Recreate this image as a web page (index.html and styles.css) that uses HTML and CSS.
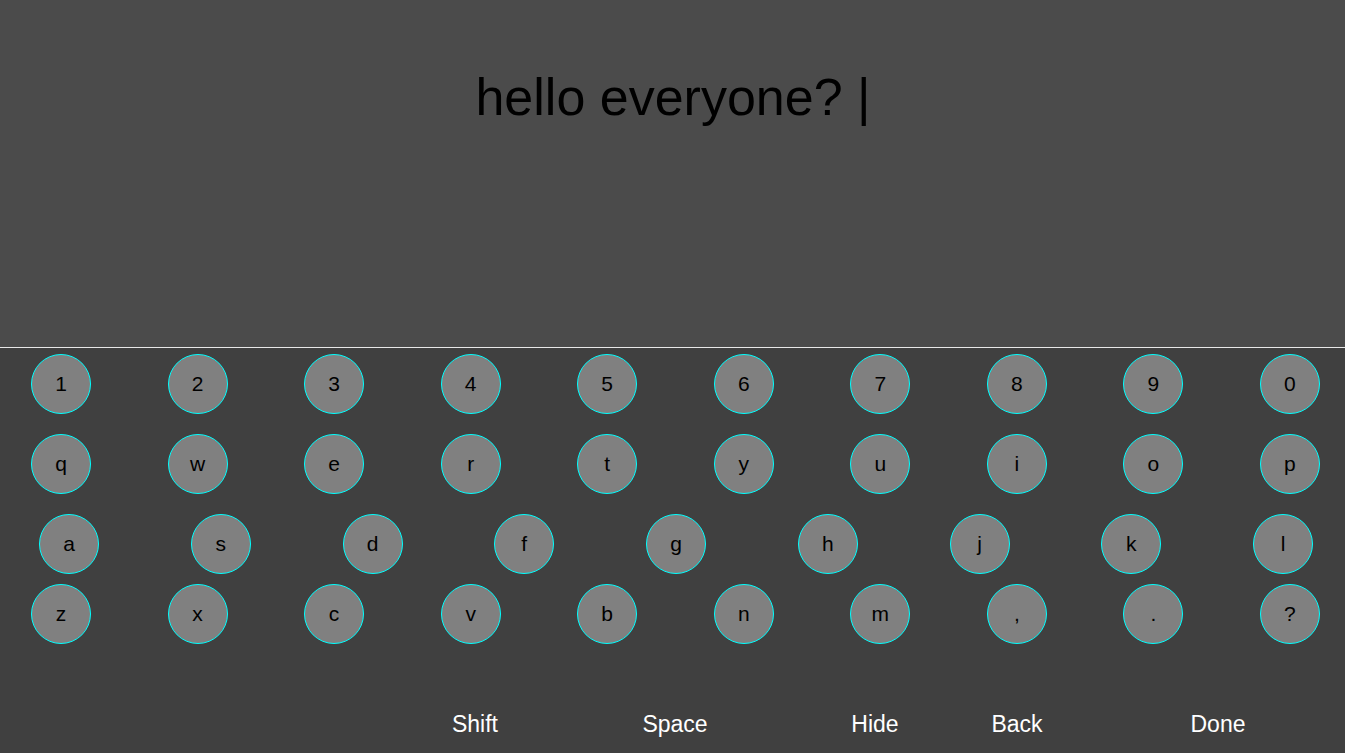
FILE: index.html
```html
<!DOCTYPE html>
<html>
<head>
<meta charset="utf-8">
<link rel="stylesheet" href="styles.css">
</head>
<body>
<div class="screen">
  <div class="display">
    <div class="typed">hello everyone? |</div>
  </div>
  <div class="keyboard">
    <div class="row row-std">
      <div class="key">1</div><div class="key">2</div><div class="key">3</div><div class="key">4</div><div class="key">5</div><div class="key">6</div><div class="key">7</div><div class="key">8</div><div class="key">9</div><div class="key">0</div>
    </div>
    <div class="row row-std gap-20">
      <div class="key">q</div><div class="key">w</div><div class="key">e</div><div class="key">r</div><div class="key">t</div><div class="key">y</div><div class="key">u</div><div class="key">i</div><div class="key">o</div><div class="key">p</div>
    </div>
    <div class="row row-home gap-20">
      <div class="key">a</div><div class="key">s</div><div class="key">d</div><div class="key">f</div><div class="key">g</div><div class="key">h</div><div class="key">j</div><div class="key">k</div><div class="key">l</div>
    </div>
    <div class="row row-std gap-10">
      <div class="key">z</div><div class="key">x</div><div class="key">c</div><div class="key">v</div><div class="key">b</div><div class="key">n</div><div class="key">m</div><div class="key">,</div><div class="key">.</div><div class="key">?</div>
    </div>
    <div class="actions">
      <div class="action w200">Shift</div>
      <div class="action w200">Space</div>
      <div class="action w200">Hide</div>
      <div class="action w84">Back</div>
      <div class="action w200 done">Done</div>
    </div>
  </div>
</div>
</body>
</html>
```
FILE: styles.css
```css
html, body {
  margin: 0;
  padding: 0;
  width: 1345px;
  height: 753px;
  overflow: hidden;
  font-family: "Liberation Sans", Arial, sans-serif;
}
.screen {
  display: flex;
  flex-direction: column;
  width: 1345px;
  height: 753px;
}
.display {
  height: 347px;
  background: #4b4b4b;
  border-bottom: 1px solid #e8e8e8;
  box-sizing: content-box;
}
.typed {
  padding-top: 70px;
  text-align: center;
  font-size: 52px;
  line-height: 55px;
  color: #000;
  padding-left: 1px;
}
.keyboard {
  flex: 1;
  background: #404040;
  padding-top: 6px;
  display: flex;
  flex-direction: column;
}
.row {
  display: flex;
  justify-content: space-between;
  height: 60px;
}
.row-std {
  padding: 0 25px 0 31px;
}
.row-home {
  padding: 0 32px 0 39px;
}
.gap-20 { margin-top: 20px; }
.gap-10 { margin-top: 10px; }
.key {
  width: 60px;
  height: 60px;
  box-sizing: border-box;
  border-radius: 50%;
  border: 1px solid #00ffff;
  background: #808080;
  display: flex;
  align-items: center;
  justify-content: center;
  font-size: 21px;
  color: #000;
}
.actions {
  display: flex;
  padding-left: 375px;
  margin-top: 67px;
}
.action {
  text-align: center;
  color: #fff;
  font-size: 23px;
  line-height: 26px;
}
.w200 { width: 200px; }
.w84 { width: 84px; }
.done { margin-left: 59px; }
```
